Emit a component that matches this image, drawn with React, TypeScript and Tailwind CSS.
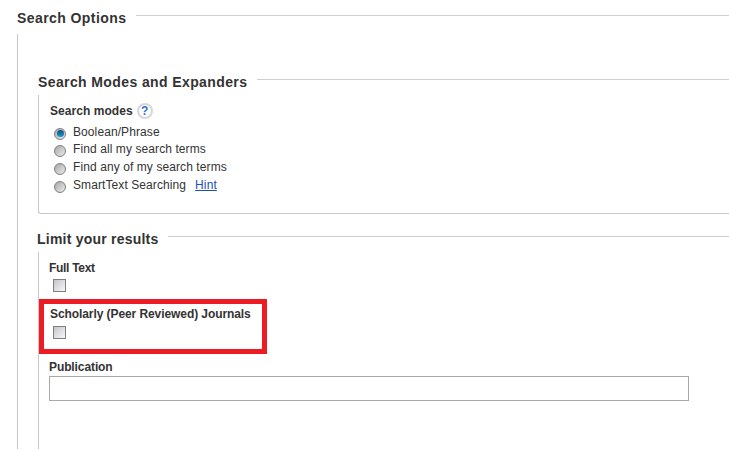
const labelText = "text-[#333]";

function Radio({ checked = false }: { checked?: boolean }) {
  return (
    <span className="flex size-[12px] shrink-0 items-center justify-center rounded-full border border-[#7f7f7f] bg-gradient-to-br from-[#a8a8a8] to-[#ececec]">
      {checked && (
        <span className="size-[7px] rounded-full bg-gradient-to-b from-[#0b4f7d] to-[#1d9ad6]" />
      )}
    </span>
  );
}

function Checkbox() {
  return (
    <span className="block size-[13px] border border-[#7f7f7f] bg-gradient-to-br from-[#c4c4cc] to-[#f8f8fa] p-px" />
  );
}

function ModeRow({
  label,
  checked,
  className,
  children,
}: {
  label: string;
  checked?: boolean;
  className?: string;
  children?: React.ReactNode;
}) {
  return (
    <div className={`flex h-[18px] items-center ${className ?? ""}`}>
      <span className="mt-[3px] mr-[7px] ml-[4px]">
        <Radio checked={checked} />
      </span>
      <span className={`text-[12px] tracking-[0.09px] ${labelText}`}>{label}</span>
      {children}
    </div>
  );
}

function SectionTitle({
  title,
  className,
  titleClassName,
}: {
  title: string;
  className?: string;
  titleClassName?: string;
}) {
  return (
    <div className={`flex items-start ${className ?? ""}`}>
      <h3 className={`text-[14px] leading-[16px] font-bold whitespace-nowrap ${titleClassName ?? ""} ${labelText}`}>
        {title}
      </h3>
      <div className="mt-[5px] ml-[10px] h-px grow bg-[#cfcfcf]" />
    </div>
  );
}

export default function App() {
  return (
    <div className="relative h-[449px] w-[729px] overflow-hidden bg-white font-['Liberation_Sans',Arial,sans-serif]">
      <div className="flex items-start pt-[10px] pl-[17px]">
        <h2 className={`text-[14px] leading-[16px] font-bold tracking-[0.42px] whitespace-nowrap ${labelText}`}>
          Search Options
        </h2>
        <div className="mt-[5px] ml-[10px] h-px grow bg-[#cfcfcf]" />
      </div>

      <div className="mt-[8px] ml-[17px] h-[415px] border-l border-[#c4c4c4] pt-[40px] pl-[20px]">
        <SectionTitle title="Search Modes and Expanders" titleClassName="tracking-[0.39px]" />

        <div className="mt-[5px] h-[119px] rounded-bl-[3px] border-b border-l border-[#c8c8c8] pt-[8px] pl-[11px]">
          <div className="flex h-[16px] items-center">
            <span className={`text-[12px] font-bold tracking-[0.05px] ${labelText}`}>
              Search modes
            </span>
            <span className="ml-[4px] flex size-[16px] items-center justify-center rounded-full border-2 border-[#d6d6d6] bg-white text-[12px] leading-none font-bold text-[#2f6fd0]">
              ?
            </span>
          </div>
          <div className="mt-[3px]">
            <ModeRow label="Boolean/Phrase" checked className="pt-[2px]" />
            <ModeRow label="Find all my search terms" />
            <ModeRow label="Find any of my search terms" />
            <ModeRow label="SmartText Searching">
              <a href="#" className="mb-[1px] ml-[9px] text-[12px] tracking-[0.1px] text-[#1a50b8] underline">
                Hint
              </a>
            </ModeRow>
          </div>
        </div>

        <SectionTitle
          title="Limit your results"
          className="mt-[17px] -ml-px"
          titleClassName="tracking-[0.22px]"
        />

        <div className="mt-[5px] h-[220px] border-l border-[#c8c8c8] pl-[10px]">
          <div className={`pt-[9px] text-[12px] leading-[14px] font-bold tracking-[-0.3px] ${labelText}`}>
            Full Text
          </div>
          <div className="mt-[4px] ml-[4px]">
            <Checkbox />
          </div>
          <div className={`mt-[15px] ml-px text-[12px] leading-[14px] font-bold tracking-[-0.08px] ${labelText}`}>
            Scholarly (Peer Reviewed) Journals
          </div>
          <div className="mt-[5px] ml-[4px]">
            <Checkbox />
          </div>
          <div className={`mt-[21px] text-[12px] leading-[14px] font-bold tracking-[-0.1px] ${labelText}`}>
            Publication
          </div>
          <div className="mt-[2px] h-[25px] w-[640px] border border-[#a9a9a9] bg-white" />
        </div>
      </div>

      <div className="absolute top-[299px] left-[39px] h-[55px] w-[228px] border-[5px] border-[#ed1c24]" />
    </div>
  );
}
